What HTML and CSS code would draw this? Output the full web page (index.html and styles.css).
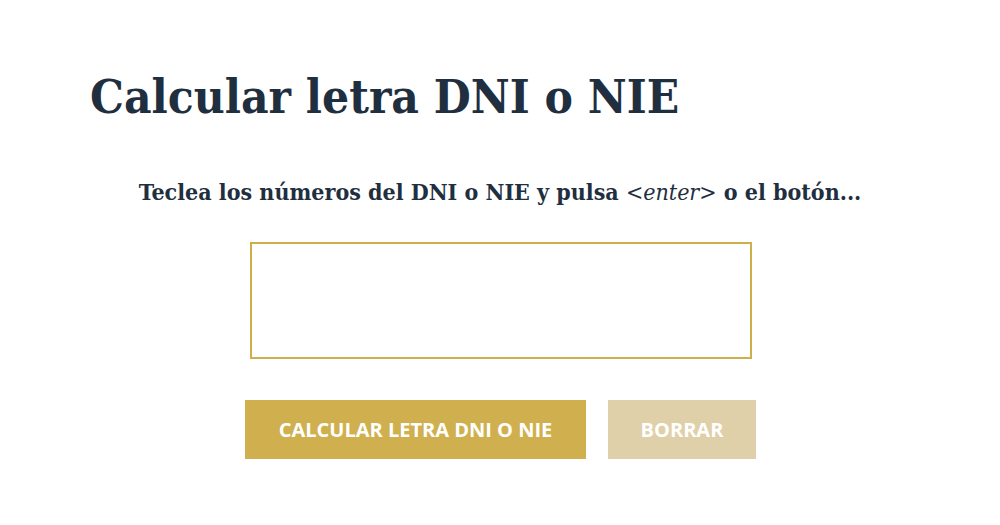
FILE: index.html
```html
<!DOCTYPE html>
<html lang="es">
<head>
<meta charset="utf-8">
<title>Calcular letra DNI o NIE</title>
<link rel="stylesheet" href="styles.css">
</head>
<body>
<main class="page">
  <h1 class="title">Calcular letra DNI o NIE</h1>
  <p class="lead">Teclea los números del DNI o NIE y pulsa <em>&lt;enter&gt;</em> o el botón...</p>
  <div class="field-row">
    <input class="dni-input" type="text" aria-label="DNI o NIE">
  </div>
  <div class="actions">
    <button class="btn btn-primary" type="button">Calcular letra DNI o NIE</button>
    <button class="btn btn-secondary" type="button">Borrar</button>
  </div>
</main>
</body>
</html>
```
FILE: styles.css
```css
html, body {
  margin: 0;
  padding: 0;
  background: #ffffff;
}
.page {
  width: 1000px;
  padding-top: 63px;
  box-sizing: border-box;
}
.title {
  margin: 0 0 0 90px;
  font-family: "DejaVu Serif Condensed", "DejaVu Serif", serif;
  font-stretch: condensed;
  font-weight: 700;
  font-size: 47.4px;
  line-height: 66px;
  color: #1f2f40;
}
.lead {
  margin: 48px 0 0 0;
  text-align: center;
  font-family: "DejaVu Serif Condensed", "DejaVu Serif", serif;
  font-stretch: condensed;
  font-weight: 700;
  font-size: 23px;
  line-height: 30px;
  color: #1f2f40;
}
.lead em {
  font-weight: 400;
  font-style: italic;
}
.field-row {
  display: flex;
  justify-content: center;
  margin-top: 35px;
  padding-left: 2px;
}
.dni-input {
  width: 502px;
  height: 117px;
  box-sizing: border-box;
  border: 2px solid #cdb04a;
  background: #ffffff;
  outline: none;
  margin: 0;
}
.actions {
  display: flex;
  justify-content: center;
  gap: 22px;
  margin-top: 41px;
  padding-left: 1px;
}
.btn {
  border: 0;
  margin: 0;
  height: 59px;
  font-family: "Open Sans", "Liberation Sans", sans-serif;
  font-weight: 700;
  font-size: 20px;
  text-transform: uppercase;
  color: #ffffff;
  cursor: pointer;
}
.btn-primary {
  width: 341px;
  background: #d0b04e;
}
.btn-secondary {
  width: 148px;
  background: #dfd0aa;
}
```
